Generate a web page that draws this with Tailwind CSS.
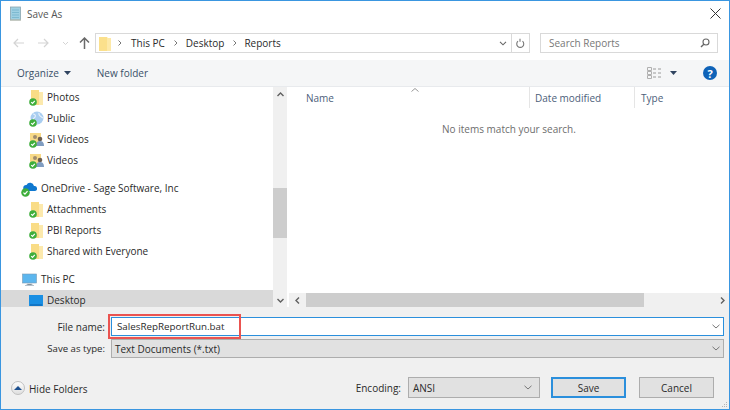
<!DOCTYPE html>
<html>
<head>
<meta charset="utf-8">
<script src="https://cdn.jsdelivr.net/npm/@tailwindcss/browser@4"></script>
</head>
<body class="m-0 overflow-hidden bg-white">
<svg class="hidden" width="0" height="0">
  <defs>
    <symbol id="check" viewBox="0 0 8 8"><circle cx="4" cy="4" r="3.800" fill="#3fae3c"/><path d="M2.200 4.100 3.500 5.400 5.800 2.800" fill="none" stroke="#fff" stroke-width="1.100"/></symbol>
    <symbol id="folder" viewBox="0 0 12 15"><path d="M0 0h8v15H0z" fill="#f9dc86"/><path d="M8 2h4v13H8z" fill="#fce9ad"/></symbol>
    <symbol id="shared" viewBox="0 0 14 15"><path d="M0 1h11v13H0z" fill="#f7d987"/><circle cx="5" cy="5" r="2" fill="#a08d6e"/><circle cx="10" cy="7" r="2.300" fill="#6d5e50"/><path d="M6 14c0-4 2-5 4-5s4 1 4 5z" fill="#7f9cc0"/></symbol>
  </defs>
</svg>
<div class="w-[730px] h-[410px] border border-[#3a96e0] flex flex-col overflow-hidden bg-white text-[#2a2a2a] text-[10px] leading-none" style="font-family:'Open Sans','Noto Sans',sans-serif">
  <!-- Title -->
  <div class="h-[25px] shrink-0 flex items-center pl-[8px] pr-[8px] gap-[5px]">
    <svg width="13" height="15" viewBox="0 0 13 15"><rect x="1.500" y="1" width="10" height="13" fill="#9fd0e2" stroke="#8aa5b0" stroke-width=".8"/><path d="M3 4h7M3 6.500h7M3 9h7M3 11.500h7" stroke="#6fb0c8" stroke-width=".7"/><path d="M1 14h11" stroke="#b9b9a8"/></svg>
    <span class="text-[#555]">Save As</span>
    <svg class="ml-auto" width="11" height="11" viewBox="0 0 11 11"><path d="M.5.500l10 10M10.500.500l-10 10" stroke="#333" stroke-width="1"/></svg>
  </div>
  <!-- Nav -->
  <div class="h-[34px] shrink-0 flex items-center pl-[12px] pr-[10px]">
    <svg width="11" height="10" viewBox="0 0 11 10"><path d="M5 1 1 5l4 4M1 5h10" fill="none" stroke="#d4d4d4" stroke-width="1.200"/></svg>
    <svg class="ml-[14px]" width="11" height="10" viewBox="0 0 11 10"><path d="M6 1l4 4-4 4M0 5h10" fill="none" stroke="#d4d4d4" stroke-width="1.200"/></svg>
    <svg class="ml-[13px]" width="7" height="5" viewBox="0 0 7 5"><path d="M1 1l2.500 2.500L6 1" fill="none" stroke="#d4d4d4"/></svg>
    <svg class="ml-[10px]" width="11" height="12" viewBox="0 0 11 12"><path d="M1 5.500 5.500 1 10 5.500M5.500 1v11" fill="none" stroke="#6a6a6a" stroke-width="1.500"/></svg>
    <div class="ml-[5px] w-[435px] h-[20px] border border-[#d9d9d9] flex items-center pl-[3px]">
      <svg width="12" height="15" viewBox="0 0 12 15"><path d="M0 1h8l1 1h3v13H0z" fill="#fde9a8"/><path d="M0 1h8v14H0z" fill="#fbe08c"/></svg>
      <svg class="ml-[7px]" width="4" height="6" viewBox="0 0 4 6"><path d="M.5.500 3 3 .5 5.500" fill="none" stroke="#777"/></svg>
      <span class="ml-[9px]">This PC</span>
      <svg class="ml-[9px]" width="4" height="6" viewBox="0 0 4 6"><path d="M.5.500 3 3 .5 5.500" fill="none" stroke="#777"/></svg>
      <span class="ml-[8px]">Desktop</span>
      <svg class="ml-[9px]" width="4" height="6" viewBox="0 0 4 6"><path d="M.5.500 3 3 .5 5.500" fill="none" stroke="#777"/></svg>
      <span class="ml-[7px]">Reports</span>
      <svg class="ml-auto mr-[4px]" width="8" height="5" viewBox="0 0 8 5"><path d="M1 .8l3 3 3-3" fill="none" stroke="#666" stroke-width="1.100"/></svg>
      <div class="w-[18px] h-full border-l border-[#d9d9d9] flex items-center justify-center">
        <svg width="9" height="11" viewBox="0 0 9 11"><path d="M2 3.200a3.500 3.500 0 1 0 4.500 0M4 .8v3" fill="none" stroke="#777" stroke-width="1.100"/></svg>
      </div>
    </div>
    <div class="ml-[10px] w-[178px] h-[20px] border border-[#d9d9d9] flex items-center pl-[8px] pr-[7px] justify-between text-[#777]">
      <span>Search Reports</span>
      <svg width="10" height="10" viewBox="0 0 10 10"><circle cx="6" cy="4" r="3" fill="none" stroke="#666" stroke-width="1.100"/><path d="M3.800 6.200 1 9" stroke="#666" stroke-width="1.400"/></svg>
    </div>
  </div>
  <!-- Toolbar -->
  <div class="h-[27px] shrink-0 bg-[#f5f6f7] border-b border-[#e8eaed] flex items-center pl-[16px] pr-[12px] text-[#3a5068]">
    <span>Organize</span>
    <svg class="ml-[5px]" width="7" height="4" viewBox="0 0 7 4"><path d="M0 0h7L3.500 4z" fill="#2f4460"/></svg>
    <span class="ml-[26px]">New folder</span>
    <svg class="ml-auto" width="15" height="13" viewBox="0 0 15 13"><path d="M.5.500h4v3h-4zM.5 4.500h4v3h-4zM.5 8.500h4v3h-4z" fill="none" stroke="#b0b0b0"/><path d="M6 2h3M11 2h3M6 6h3M11 6h3M6 10h3M11 10h3" stroke="#9a9a9a"/></svg>
    <svg class="ml-[8px]" width="7" height="4" viewBox="0 0 7 4"><path d="M0 0h7L3.500 4z" fill="#2f4460"/></svg>
    <div class="ml-[26px] w-[14px] h-[14px] rounded-full bg-[#0f63b8] text-white font-bold text-[11px] flex items-center justify-center">?</div>
  </div>
  <!-- Main -->
  <div class="h-[220px] shrink-0 flex">
    <!-- Sidebar -->
    <div class="w-[272px] overflow-hidden shrink-0">
      <div class="h-[21px] flex items-center pl-[29px] gap-[4px]"><div class="relative w-[13px] h-[15px]"><svg class="absolute left-[1px] top-0" width="12" height="15"><use href="#folder"/></svg><svg class="absolute -left-[1px] bottom-[-1px]" width="8" height="8"><use href="#check"/></svg></div><span class="pb-[2px]">Photos</span></div>
      <div class="h-[21px] flex items-center pl-[29px] gap-[4px]"><div class="relative w-[13px] h-[15px]"><svg class="absolute left-0 top-0" width="14" height="14" viewBox="0 0 14 14"><circle cx="7" cy="7" r="6.500" fill="#a9cdf0"/><path d="M3 3c3 0 3 3 1 4s1 5 3 6M9 2c-1 3 3 4 4 5" fill="none" stroke="#e8f2fb" stroke-width="1.100"/></svg><svg class="absolute -left-[1px] bottom-[-1px]" width="8" height="8"><use href="#check"/></svg></div><span class="pb-[2px]">Public</span></div>
      <div class="h-[21px] flex items-center pl-[29px] gap-[4px]"><div class="relative w-[13px] h-[15px]"><svg class="absolute left-0 top-0" width="14" height="15"><use href="#shared"/></svg><svg class="absolute -left-[1px] bottom-[-1px]" width="8" height="8"><use href="#check"/></svg></div><span class="pb-[2px]">SI Videos</span></div>
      <div class="h-[21px] flex items-center pl-[29px] gap-[4px]"><div class="relative w-[13px] h-[15px]"><svg class="absolute left-0 top-0" width="14" height="15"><use href="#shared"/></svg><svg class="absolute -left-[1px] bottom-[-1px]" width="8" height="8"><use href="#check"/></svg></div><span class="pb-[2px]">Videos</span></div>
      <div class="h-[7px]"></div>
      <div class="h-[21px] flex items-center pl-[21px] gap-[4px]"><div class="relative w-[15px] h-[14px]"><svg class="absolute inset-0" width="15" height="12" viewBox="0 0 15 12"><path d="M4 9a3 3 0 0 1 .5-6A4 4 0 0 1 12 4a2.500 2.500 0 0 1 1 5z" fill="#0f78d0"/></svg><svg class="absolute -left-[1px] bottom-[-1px]" width="9" height="9"><use href="#check"/></svg></div><span class="pb-[2px]">OneDrive - Sage Software, Inc</span></div>
      <div class="h-[21px] flex items-center pl-[29px] gap-[4px]"><div class="relative w-[13px] h-[15px]"><svg class="absolute left-[1px] top-0" width="12" height="15"><use href="#folder"/></svg><svg class="absolute -left-[1px] bottom-[-1px]" width="8" height="8"><use href="#check"/></svg></div><span class="pb-[2px]">Attachments</span></div>
      <div class="h-[21px] flex items-center pl-[29px] gap-[4px]"><div class="relative w-[13px] h-[15px]"><svg class="absolute left-[1px] top-0" width="12" height="15"><use href="#folder"/></svg><svg class="absolute -left-[1px] bottom-[-1px]" width="8" height="8"><use href="#check"/></svg></div><span class="pb-[2px]">PBI Reports</span></div>
      <div class="h-[21px] flex items-center pl-[29px] gap-[4px]"><div class="relative w-[13px] h-[15px]"><svg class="absolute left-[1px] top-0" width="12" height="15"><use href="#folder"/></svg><svg class="absolute -left-[1px] bottom-[-1px]" width="8" height="8"><use href="#check"/></svg></div><span class="pb-[2px]">Shared with Everyone</span></div>
      <div class="h-[7px]"></div>
      <div class="h-[21px] flex items-center pl-[21px] gap-[4px]"><svg width="15" height="14" viewBox="0 0 15 14"><rect x=".5" y="1" width="14" height="9" fill="#5cb6ee" stroke="#7a9cb5" stroke-width=".6"/><path d="M5 11h5v1H5zM3 12.500h9" stroke="#b5c2cc"/></svg><span class="pb-[2px]">This PC</span></div>
      <div class="h-[21px] flex items-center pl-[28px] gap-[4px] bg-[#d9d9d9]"><svg width="14" height="11" viewBox="0 0 14 11"><rect width="14" height="11" fill="#1a8fe3"/><path d="M1 10h12" stroke="#0a5ca8"/></svg><span class="pb-[2px]">Desktop</span></div>
    </div>
    <!-- vertical scrollbar -->
    <div class="w-[14px] shrink-0 bg-[#f0f0f0] flex flex-col items-center">
      <div class="h-[14px] flex items-center"><svg width="7" height="5" viewBox="0 0 7 5"><path d="M.5 4 3.500 1l3 3" fill="none" stroke="#606060" stroke-width="1.400"/></svg></div>
      <div class="h-[87px]"></div>
      <div class="w-full h-[50px] bg-[#cdcdcd]"></div>
      <div class="mt-auto h-[14px] flex items-center"><svg width="7" height="5" viewBox="0 0 7 5"><path d="M.5 1l3 3 3-3" fill="none" stroke="#606060" stroke-width="1.400"/></svg></div>
    </div>
    <!-- Files -->
    <div class="flex-1 flex flex-col ml-[2px] min-w-0">
      <div class="h-[21px] shrink-0 flex items-center text-[#4c607a] relative">
        <div class="w-[241px] h-full border-r border-[#e5e5e5] flex items-center pl-[17px]">Name</div>
        <svg class="absolute left-[122px] top-[1px]" width="8" height="4" viewBox="0 0 8 4"><path d="M.5 3.500 4 .5l3.500 3" fill="none" stroke="#999"/></svg>
        <div class="w-[105px] h-full border-r border-[#e5e5e5] flex items-center pl-[5px]">Date modified</div>
        <div class="flex-1 pl-[6px]">Type</div>
      </div>
      <div class="flex-1 min-h-0 flex flex-col">
        <div class="h-[185px] pt-[16px] text-center text-[#6d6d6d]">No items match your search.</div>
        <div class="h-[14px] bg-[#f0f0f0] flex items-center">
          <div class="w-[17px] flex justify-center"><svg width="5" height="7" viewBox="0 0 5 7"><path d="M4 .5 1 3.500l3 3" fill="none" stroke="#606060" stroke-width="1.400"/></svg></div>
          <div class="w-[338px] h-full bg-[#cdcdcd]"></div>
          <div class="ml-auto w-[14px] flex justify-center"><svg width="5" height="7" viewBox="0 0 5 7"><path d="M1 .5l3 3-3 3" fill="none" stroke="#606060" stroke-width="1.400"/></svg></div>
        </div>
      </div>
    </div>
  </div>
  <!-- Footer -->
  <div class="flex-1 bg-[#f0f0f0] flex flex-col relative">
    <div class="h-[10px]"></div>
    <div class="h-[19px] flex items-center">
      <div class="w-[104px] text-right">File name:</div>
      <div class="ml-[6px] w-[613px] h-full border border-[#2b8fdc] bg-white flex items-center pl-[5px] relative">
        <span class="text-[9.8px]">SalesRepReportRun.bat</span>
        <svg class="ml-auto mr-[3px]" width="8" height="5" viewBox="0 0 8 5"><path d="M.5.800 4 4 7.500.800" fill="none" stroke="#777"/></svg>
        <div class="absolute left-[-4px] top-[-4px] w-[133px] h-[25px] border-2 border-[#ea5350]"></div>
      </div>
    </div>
    <div class="h-[3px]"></div>
    <div class="h-[19px] flex items-center">
      <div class="w-[104px] text-right text-[9.6px]">Save as type:</div>
      <div class="ml-[6px] w-[613px] h-full border border-[#adadad] bg-[#e1e1e1] flex items-center pl-[3px]">
        <span>Text Documents (*.txt)</span>
        <svg class="ml-auto mr-[3px]" width="8" height="5" viewBox="0 0 8 5"><path d="M.5.800 4 4 7.500.800" fill="none" stroke="#777"/></svg>
      </div>
    </div>
    <div class="h-[19px]"></div>
    <div class="h-[21px] flex items-center pl-[10px] pr-[15px]">
      <div class="w-[14px] h-[14px] rounded-full border border-[#c0c0c0] bg-gradient-to-b from-[#fdfdfd] to-[#dfdfdf] flex items-center justify-center"><svg width="8" height="4" viewBox="0 0 8 4"><path d="M4 0l4 4H0z" fill="#1c4f8f"/></svg></div>
      <span class="ml-[4px] mt-[3px]">Hide Folders</span>
      <span class="ml-auto pr-[1px]">Encoding:</span>
      <div class="ml-[6px] w-[132px] h-[21px] border border-[#adadad] bg-[#e1e1e1] flex items-center pl-[4px] pr-[7px] justify-between">
        <span>ANSI</span>
        <svg width="8" height="5" viewBox="0 0 8 5"><path d="M.5.800 4 4 7.500.800" fill="none" stroke="#777"/></svg>
      </div>
      <div class="ml-[11px] w-[75px] h-[21px] border-2 border-[#2b8fdc] bg-[#e1e1e1] flex items-center justify-center">Save</div>
      <div class="ml-[13px] w-[75px] h-[21px] border border-[#adadad] bg-[#e1e1e1] flex items-center justify-center">Cancel</div>
    </div>
    <svg class="absolute right-[1px] bottom-[1px]" width="7" height="7" viewBox="0 0 7 7"><path d="M5 1h1v1H5zM3 3h1v1H3zM5 3h1v1H5zM1 5h1v1H1zM3 5h1v1H3zM5 5h1v1H5z" fill="#b5b5b5"/></svg>
  </div>
</div>
</body>
</html>
